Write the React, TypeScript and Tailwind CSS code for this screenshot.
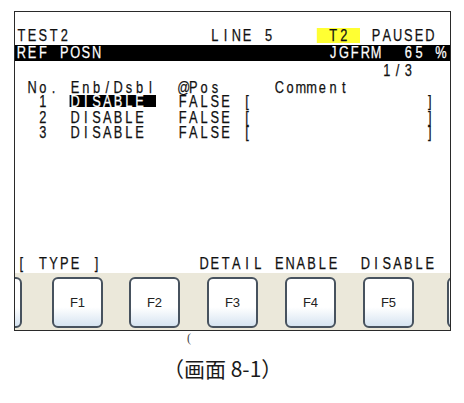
type Seg = { text: string; cls?: string; cell?: string }

// one character per fixed cell, like the pendant's 40-column text screen
function Row({ segs }: { segs: Seg[] }) {
  return (
    <div className="flex h-[14px] w-[537.5px] shrink-0 origin-left scale-x-[0.8] items-start">
      {segs.map((s, i) => (
        <span key={i} className={`flex ${s.cls ?? ''}`}>
          {Array.from(s.text).map((ch, j) => (
            <span
              key={j}
              className={`h-[14px] w-[13.4375px] shrink-0 text-center leading-[14px] ${s.cell ?? ''}`}
            >
              {ch === ' ' ? '\u00a0' : ch}
            </span>
          ))}
        </span>
      ))}
    </div>
  )
}

function FKey({ label, className = '' }: { label?: string; className?: string }) {
  return (
    <div
      className={`flex h-[51px] w-[51px] shrink-0 items-center justify-center rounded-[6px] border-2 border-[#47525e] bg-linear-to-b from-white from-60% to-[#d6e4f1] text-[13px] text-[#222] ${className}`}
    >
      {label}
    </div>
  )
}

export default function App() {
  return (
    <div className="h-[403px] w-[464px] overflow-hidden bg-white font-['Liberation_Sans',Arial,sans-serif]">
      {/* pendant screen */}
      <div className="ml-[14px] mt-[11px] flex h-[320px] w-[437px] flex-col overflow-hidden border border-[#2a2a2a]">
        <div className="flex h-[261px] flex-col pl-px text-[16px] text-[#111] [-webkit-text-stroke:0.25px_currentColor]">
          <div className="mt-[17px] h-[16px]">
            <Row
              segs={[
                { text: 'TEST2             LINE 5    ' },
                { text: ' T2 ', cls: '-mt-px h-[15px] bg-[#ffff33]', cell: 'mt-px' },
                { text: ' PAUSED ' },
              ]}
            />
          </div>
          <div className="-ml-px h-[16px] bg-black pl-px pt-px text-white">
            <Row segs={[{ text: 'REF POSN                     JGFRM  65 %' }]} />
          </div>
          <div className="mt-[3px] h-[17px]">
            <Row segs={[{ text: '                                  1/3   ' }]} />
          </div>
          <div className="h-[14px]">
            <Row segs={[{ text: ' No. Enb/Dsbl  @Pos     Comment' }]} />
          </div>
          <div className="h-[16px]">
            <Row
              segs={[
                { text: '  1  ' },
                { text: 'DISABLE ', cls: 'h-[12px] bg-black text-white' },
                { text: '  FALSE [                ] ' },
              ]}
            />
          </div>
          <div className="h-[15px]">
            <Row segs={[{ text: '  2  DISABLE   FALSE [                ] ' }]} />
          </div>
          <div className="h-[14px]">
            <Row segs={[{ text: '  3  DISABLE   FALSE [                ] ' }]} />
          </div>
          <div className="mb-[2px] mt-auto h-[14px]">
            <Row segs={[{ text: '[ TYPE ]         DETAIL ENABLE  DISABLE ' }]} />
          </div>
        </div>

        {/* function keys */}
        <div className="flex h-[57px] items-start overflow-hidden bg-[#ebe8da] pt-[4px]">
          <FKey className="-ml-[44px]" />
          <FKey label="F1" className="ml-[30px]" />
          <FKey label="F2" className="ml-[26px]" />
          <FKey label="F3" className="ml-[27px]" />
          <FKey label="F4" className="ml-[27px]" />
          <FKey label="F5" className="ml-[27px]" />
          <FKey className="ml-[33px]" />
        </div>
      </div>

      <div className="h-[14px] pl-[187px] font-['Liberation_Serif',serif] text-[12px] leading-[14px] text-[#444]">(</div>

      <div className="mt-[13px] pl-[163px] font-['Noto_Sans_CJK_SC','Noto_Sans',sans-serif] text-[21px] leading-[21px] text-[#1a1a1a]">
        （画面 8-1）
      </div>
    </div>
  )
}
